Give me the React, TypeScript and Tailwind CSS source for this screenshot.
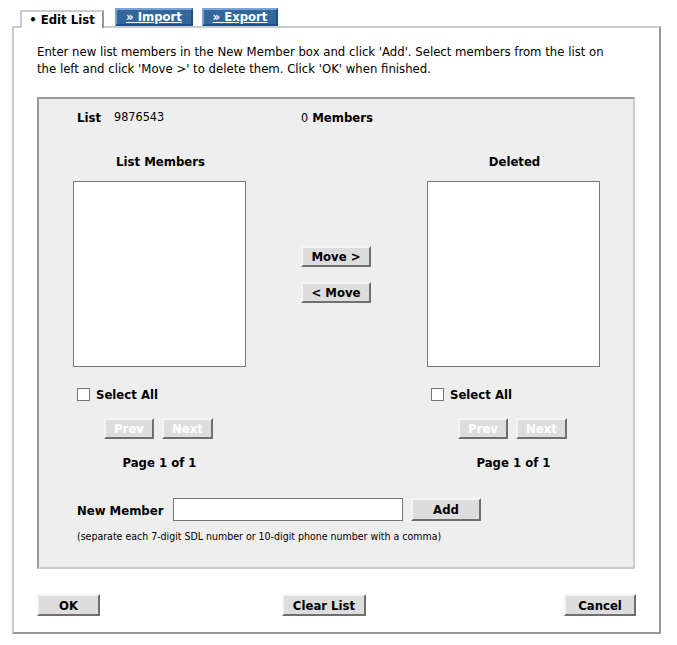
import type { ReactNode } from "react";

const font = "font-['DejaVu_Sans_Condensed','DejaVu_Sans',Tahoma,sans-serif]";

function Btn({
  children,
  className = "",
  disabled = false,
}: {
  children: ReactNode;
  className?: string;
  disabled?: boolean;
}) {
  return (
    <button
      className={`flex items-center justify-center border-2 border-t-[#f4f4f4] border-l-[#f4f4f4] border-r-[#6f6f6f] border-b-[#6f6f6f] bg-[#dddddd] text-[13px] font-bold leading-none ${
        disabled ? "text-white" : "text-black"
      } ${className}`}
    >
      {children}
    </button>
  );
}

function Column({ title }: { title: string }) {
  return (
    <div className="flex w-[173px] flex-col">
      <div className="h-[16px] text-center text-[13px] font-bold leading-[16px] pl-[2px]">{title}</div>
      <div className="mt-[11px] h-[186px] border border-[#777777] bg-white" />
      <label className="mt-[19px] flex h-[16px] items-center pl-[4px] text-[13px] font-bold">
        <span className="h-[13px] w-[13px] border border-[#767676] bg-white" />
        <span className="ml-[6px] pt-[2px]">Select All</span>
      </label>
      <div className="-ml-[2px] mt-[16px] flex justify-center gap-[8px]">
        <Btn disabled className="h-[21px] w-[50px]">Prev</Btn>
        <Btn disabled className="h-[21px] w-[51px]">Next</Btn>
      </div>
      <div className="mt-[16px] h-[16px] text-center text-[13px] font-bold leading-[16px]">
        Page 1 of 1
      </div>
    </div>
  );
}

export default function App() {
  return (
    <div className={`h-[645px] w-[677px] bg-white text-black ${font}`}>
      <div className="flex h-[26px] items-end pl-[20px]">
        <div className="relative z-10 -mb-[2px] flex h-[18px] w-[84px] items-center justify-center border-l-2 border-t-2 border-r-2 border-l-[#cccccc] border-t-[#cccccc] border-r-[#999999] bg-white text-[13px] font-bold">
          • Edit List
        </div>
        <div className="ml-[11px] flex h-[18px] w-[78px] items-center justify-center border-2 border-t-[#7aa3d6] border-l-[#7aa3d6] border-r-[#1f4f86] border-b-[#1f4f86] bg-[#336699] text-[13px] font-bold text-white underline">
          » Import
        </div>
        <div className="ml-[9px] flex h-[18px] w-[76px] items-center justify-center border-2 border-t-[#7aa3d6] border-l-[#7aa3d6] border-r-[#1f4f86] border-b-[#1f4f86] bg-[#336699] text-[13px] font-bold text-white underline">
          » Export
        </div>
      </div>

      <div className="ml-[12px] h-[608px] w-[649px] border-2 border-t-[#cccccc] border-l-[#cccccc] border-r-[#999999] border-b-[#999999] px-[23px]">
        <p className="mt-[15px] text-[13px] leading-[17px]">
          Enter new list members in the New Member box and click 'Add'. Select members from the list on
          <br />
          the left and click 'Move &gt;' to delete them. Click 'OK' when finished.
        </p>

        <div className="mt-[20px] h-[472px] w-[598px] border-2 border-t-[#999999] border-l-[#999999] border-r-[#cccccc] border-b-[#cccccc] bg-[#eeeeee]">
          <div className="mt-[11px] flex h-[16px] items-center pl-[38px] text-[13px]">
            <div className="flex w-[224px]">
              <span className="font-bold">List</span>
              <span className="ml-[13px] text-[12.5px]">9876543</span>
            </div>
            <span className="text-[12.5px]">0</span>
            <span className="ml-[4px] font-bold">Members</span>
          </div>

          <div className="mt-[28px] flex pl-[34px]">
            <Column title="List Members" />
            <div className="flex w-[181px] flex-col pl-[55px] pt-[92px]">
              <Btn className="h-[21px] w-[70px]">Move &gt;</Btn>
              <Btn className="mt-[15px] h-[21px] w-[70px]">&lt; Move</Btn>
            </div>
            <Column title="Deleted" />
          </div>

          <div className="mt-[27px] flex items-center pl-[38px]">
            <span className="w-[96px] pt-[2px] text-[13px] font-bold">New Member</span>
            <div className="h-[23px] w-[230px] border border-[#767676] bg-white" />
            <Btn className="ml-[8px] h-[23px] w-[70px]">Add</Btn>
          </div>
          <div className="mt-[9px] pl-[38px] text-[10.5px] leading-[13px]">
            (separate each 7-digit SDL number or 10-digit phone number with a comma)
          </div>
        </div>

        <div className="mt-[25px] flex">
          <Btn className="h-[22px] w-[63px]">OK</Btn>
          <Btn className="ml-[182px] h-[22px] w-[84px]">Clear List</Btn>
          <Btn className="ml-auto h-[22px] w-[72px]">Cancel</Btn>
        </div>
      </div>
    </div>
  );
}
